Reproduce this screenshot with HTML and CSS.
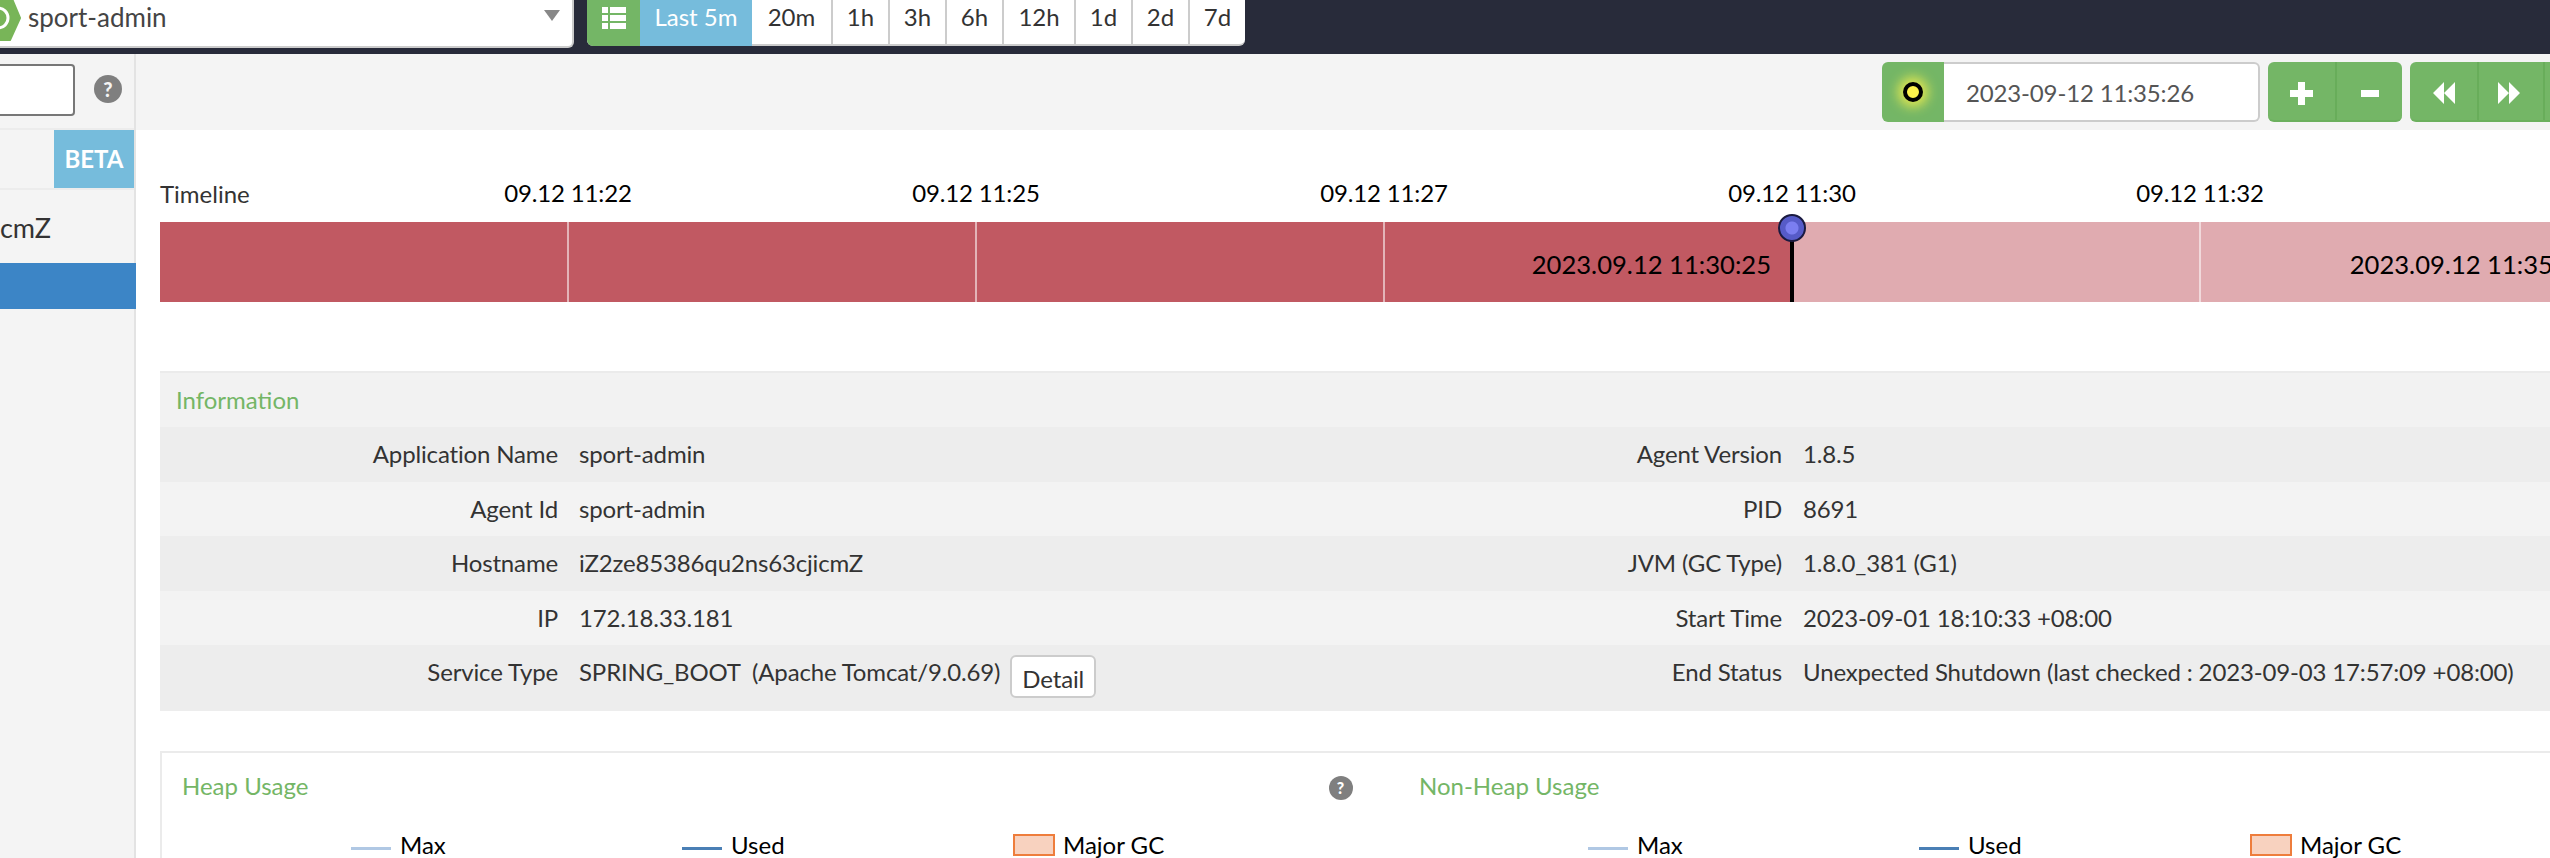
FILE: index.html
```html
<!DOCTYPE html>
<html lang="en">
<head>
    <meta charset="UTF-8">
    <title>Inspector</title>
    <link rel="stylesheet" href="styles.css">
</head>
<body>
    <div class="topbar">
        <div class="app-select">
            <svg class="app-logo" width="24" height="44" viewBox="0 0 24 44">
                <polygon points="-4,-6 10,-6 20,18 10,40 -4,40" fill="#78b558" stroke="#78b558" stroke-width="2" stroke-linejoin="round"/>
                <path d="M-2 8 A10 10 0 0 1 -2 28" fill="none" stroke="#fff" stroke-width="3"/>
            </svg>
            <span class="app-name">sport-admin</span>
            <span class="app-caret"></span>
        </div>
        <div class="range-group">
            <div class="range-icon">
                <svg width="24" height="22" viewBox="0 0 24 22" fill="#fff">
                    <rect x="0" y="0" width="6" height="6"/><rect x="8" y="0" width="16" height="6"/>
                    <rect x="0" y="8" width="6" height="6"/><rect x="8" y="8" width="16" height="6"/>
                    <rect x="0" y="16" width="6" height="6"/><rect x="8" y="16" width="16" height="6"/>
                </svg>
            </div>
            <div class="range-btn range-active">Last 5m</div>
            <div class="range-btn w-20m">20m</div>
            <div class="range-btn w-short">1h</div>
            <div class="range-btn w-short">3h</div>
            <div class="range-btn w-short">6h</div>
            <div class="range-btn w-12h">12h</div>
            <div class="range-btn w-short">1d</div>
            <div class="range-btn w-short">2d</div>
            <div class="range-btn w-short">7d</div>
        </div>
    </div>

    <div class="main">
        <div class="sidebar">
            <div class="side-search">
                <div class="side-input"></div>
                <div class="help-icon">?</div>
            </div>
            <div class="side-beta-row">
                <div class="side-beta">BETA</div>
            </div>
            <div class="side-agent">iZ2ze85386qu2ns63cjicmZ</div>
            <div class="side-selected"></div>
        </div>

        <div class="content">
            <div class="toolbar">
                <div class="date-picker">
                    <div class="date-live"><span class="live-dot"></span></div>
                    <div class="date-value">2023-09-12 11:35:26</div>
                </div>
                <div class="green-group">
                    <div class="green-btn">
                        <svg width="23" height="23" viewBox="0 0 23 23" fill="#fff"><path d="M8 0h7v8h8v7h-8v8H8v-8H0V8h8z"/></svg>
                    </div>
                    <div class="green-btn">
                        <svg width="18" height="7" viewBox="0 0 18 7" fill="#fff"><rect width="18" height="7"/></svg>
                    </div>
                </div>
                <div class="green-group">
                    <div class="green-btn">
                        <svg width="22" height="22" viewBox="0 0 22 22" fill="#fff"><path d="M0 11 11 0v22zM11 11 22 0v22z"/></svg>
                    </div>
                    <div class="green-btn btn-forward">
                        <svg width="22" height="22" viewBox="0 0 22 22" fill="#fff"><path d="M22 11 11 0v22zM11 11 0 0v22z"/></svg>
                    </div>
                    <div class="green-btn"></div>
                </div>
            </div>

            <div class="timeline">
                <div class="tick-row">
                    <div class="tick-title">Timeline</div>
                    <div class="tick-label">09.12 11:22</div>
                    <div class="tick-label">09.12 11:25</div>
                    <div class="tick-label">09.12 11:27</div>
                    <div class="tick-label">09.12 11:30</div>
                    <div class="tick-label">09.12 11:32</div>
                </div>
                <div class="bar">
                    <div class="seg seg-dark seg-first"></div>
                    <div class="seg seg-dark"></div>
                    <div class="seg seg-dark"></div>
                    <div class="seg seg-dark seg-current">2023.09.12 11:30:25</div>
                    <div class="seg seg-light"></div>
                    <div class="seg seg-light">2023.09.12 11:35:26</div>
                    <div class="pin"><span class="pin-head"></span></div>
                </div>
            </div>

            <div class="info">
                <div class="info-head">Information</div>
                <div class="info-row">
                    <div class="info-cell"><div class="info-label">Application Name</div><div>sport-admin</div></div>
                    <div class="info-cell"><div class="info-label">Agent Version</div><div>1.8.5</div></div>
                </div>
                <div class="info-row row-light">
                    <div class="info-cell"><div class="info-label">Agent Id</div><div>sport-admin</div></div>
                    <div class="info-cell"><div class="info-label">PID</div><div>8691</div></div>
                </div>
                <div class="info-row">
                    <div class="info-cell"><div class="info-label">Hostname</div><div>iZ2ze85386qu2ns63cjicmZ</div></div>
                    <div class="info-cell"><div class="info-label">JVM (GC Type)</div><div>1.8.0_381 (G1)</div></div>
                </div>
                <div class="info-row row-light">
                    <div class="info-cell"><div class="info-label">IP</div><div>172.18.33.181</div></div>
                    <div class="info-cell"><div class="info-label">Start Time</div><div>2023-09-01 18:10:33 +08:00</div></div>
                </div>
                <div class="info-row row-last">
                    <div class="info-cell">
                        <div class="info-label">Service Type</div>
                        <div class="service-value">SPRING_BOOT &nbsp;(Apache Tomcat/9.0.69)</div>
                        <div class="detail-btn">Detail</div>
                    </div>
                    <div class="info-cell"><div class="info-label">End Status</div><div>Unexpected Shutdown (last checked : 2023-09-03 17:57:09 +08:00)</div></div>
                </div>
            </div>

            <div class="charts">
                <div class="chart">
                    <div class="chart-head">
                        <span class="chart-title">Heap Usage</span>
                        <span class="help-icon help-small">?</span>
                    </div>
                    <div class="legend">
                        <div class="legend-item"><span class="line line-max"></span>Max</div>
                        <div class="legend-item"><span class="line line-used"></span>Used</div>
                        <div class="legend-item"><span class="gc-box"></span>Major GC</div>
                    </div>
                </div>
                <div class="chart">
                    <div class="chart-head">
                        <span class="chart-title">Non-Heap Usage</span>
                    </div>
                    <div class="legend">
                        <div class="legend-item"><span class="line line-max"></span>Max</div>
                        <div class="legend-item"><span class="line line-used"></span>Used</div>
                        <div class="legend-item"><span class="gc-box"></span>Major GC</div>
                    </div>
                </div>
            </div>
        </div>
    </div>
</body>
</html>
```

FILE: styles.css
```css
html, body {
    margin: 0;
    height: 100%;
    overflow: hidden;
}

body {
    font-family: Lato, "Open Sans", sans-serif;
    font-size: 24px;
    color: #333;
    background-color: #fff;
}

/* top bar */
.topbar {
    display: flex;
    height: 54px;
    background-color: #282b3a;
}

.app-select {
    display: flex;
    width: 574px;
    height: 48px;
    box-sizing: border-box;
    background-color: #fff;
    border: solid #ccc;
    border-width: 0 2px 2px 0;
    border-radius: 0 0 6px 0;
}

.app-logo {
    flex: none;
}

.app-name {
    margin-left: 4px;
    font-size: 26px;
    line-height: 34px;
    color: #444;
}

.app-caret {
    margin: 10px 12px 0 auto;
    width: 0;
    height: 0;
    border-left: 8px solid transparent;
    border-right: 8px solid transparent;
    border-top: 11px solid #888;
}

.range-group {
    display: flex;
    height: 46px;
    margin-left: 13px;
    background-color: #fff;
    border-bottom: 2px solid #ccc;
    box-sizing: border-box;
    border-radius: 0 0 6px 6px;
}

.range-icon {
    display: flex;
    align-items: flex-start;
    justify-content: center;
    width: 53px;
    height: 46px;
    padding-top: 7px;
    box-sizing: border-box;
    background-color: #74b666;
    border-radius: 0 0 0 6px;
}

.range-btn {
    box-sizing: border-box;
    width: 57px;
    line-height: 34px;
    text-align: center;
    border-left: 2px solid #ccc;
}

.range-active {
    width: 112px;
    height: 46px;
    color: #fff;
    background-color: #76bcdc;
    border-left: none;
}

.w-20m {
    width: 79px;
    border-left: none;
}

.w-12h {
    width: 72px;
}

/* left side */
.main {
    display: flex;
    height: 804px;
}

.sidebar {
    flex: none;
    width: 136px;
    box-sizing: border-box;
    background-color: #f4f4f4;
    border-right: 2px solid #e3e3e3;
}

.side-search {
    display: flex;
    align-items: flex-start;
    height: 74px;
    border-bottom: 2px solid #ececec;
}

.side-input {
    width: 75px;
    height: 52px;
    margin-top: 10px;
    box-sizing: border-box;
    background-color: #fff;
    border: 2px solid #777;
    border-left: none;
    border-radius: 0 4px 4px 0;
}

.help-icon {
    width: 28px;
    height: 28px;
    margin: 21px 0 0 19px;
    border-radius: 50%;
    background-color: #7f7f7f;
    color: #f4f4f4;
    font-size: 20px;
    font-weight: 900;
    line-height: 28px;
    text-align: center;
}

.side-beta-row {
    display: flex;
    justify-content: flex-end;
    height: 60px;
    box-sizing: border-box;
    border-bottom: 2px solid #ececec;
}

.side-beta {
    width: 80px;
    height: 58px;
    background-color: #76bcdc;
    color: #fff;
    font-weight: 700;
    line-height: 58px;
    text-align: center;
}

.side-agent {
    display: flex;
    justify-content: flex-end;
    height: 73px;
    padding-right: 83px;
    font-size: 27px;
    line-height: 76px;
    white-space: nowrap;
}

.side-selected {
    width: 136px;
    height: 46px;
    background-color: #3c85c6;
}

/* right side */
.content {
    flex: 1;
    min-width: 0;
    overflow: hidden;
}

.toolbar {
    display: flex;
    gap: 8px;
    height: 76px;
    padding: 8px 0 0 1746px;
    box-sizing: border-box;
    background-color: #f4f4f4;
}

.date-picker {
    display: flex;
    flex: none;
    width: 378px;
    height: 60px;
}

.date-live {
    display: flex;
    align-items: center;
    justify-content: center;
    width: 62px;
    background-color: #74b666;
    border-radius: 6px 0 0 6px;
}

.live-dot {
    width: 12px;
    height: 12px;
    background-color: #fdf24c;
    border: 4px solid #000;
    border-radius: 50%;
    box-shadow: 0 0 12px 5px rgba(253, 242, 76, 0.8);
}

.date-value {
    flex: 1;
    padding-left: 22px;
    background-color: #fff;
    border: 2px solid #ccc;
    border-left: none;
    border-radius: 0 6px 6px 0;
    color: #555;
    letter-spacing: -0.15px;
    line-height: 58px;
}

.green-group {
    display: flex;
    flex: none;
    height: 60px;
    box-sizing: border-box;
    background-color: #74b666;
    border-bottom: 2px solid #6cb05e;
    border-radius: 6px;
}

.green-btn {
    display: flex;
    align-items: center;
    justify-content: center;
    width: 67px;
    height: 58px;
    padding-top: 4px;
    box-sizing: border-box;
}

.green-btn + .green-btn {
    border-left: 2px solid #68ad5a;
}

.btn-forward {
    width: 66px;
    padding-right: 4px;
}

/* timeline */
.timeline {
    padding: 48px 0 0 24px;
}

.tick-row {
    display: flex;
    height: 44px;
    width: 2448px;
    color: #000;
}

.tick-title {
    flex: none;
    width: 204px;
    color: #333;
    line-height: 32px;
}

.tick-label {
    flex: none;
    width: 408px;
    letter-spacing: -0.15px;
    line-height: 30px;
    text-align: center;
}

.bar {
    position: relative;
    display: flex;
    width: 2449px;
    height: 80px;
}

.seg {
    flex: none;
    width: 408px;
    box-sizing: border-box;
    padding-right: 18px;
    border-right: 2px solid rgba(255, 255, 255, 0.55);
    color: #000;
    font-size: 25.6px;
    line-height: 84px;
    text-align: right;
}

.seg-first {
    width: 409px;
}

.seg-dark {
    background-color: #c15962;
}

.seg-light {
    background-color: #e0abb0;
}

.seg-current {
    padding-right: 22px;
    border-right: none;
}

.pin {
    position: absolute;
    left: 1630px;
    top: 0;
    width: 4px;
    height: 80px;
    background-color: #000;
}

.pin-head {
    position: absolute;
    left: -12px;
    top: -8px;
    width: 28px;
    height: 28px;
    box-sizing: border-box;
    border: 2px solid #1a1a40;
    border-radius: 50%;
    background: radial-gradient(circle, #7b7ef0 0, #7b7ef0 6px, #565bc8 7px);
}

/* information */
.info {
    width: 2448px;
    margin: 69px 0 0 24px;
    border-top: 2px solid #ebebeb;
    background-color: #f2f2f2;
}

.info-head {
    height: 54px;
    padding-left: 16px;
    color: #74b666;
    line-height: 54px;
}

.info-row {
    display: grid;
    grid-template-columns: 1224px 1224px;
    height: 54.5px;
    line-height: 54px;
    background-color: #ededed;
}

.row-light {
    background-color: #f3f3f3;
}

.row-last {
    height: 66px;
}

.info-cell {
    display: flex;
    gap: 21px;
    letter-spacing: -0.15px;
}

.info-label {
    flex: none;
    width: 398px;
    text-align: right;
}

.detail-btn {
    height: 43px;
    margin: 10px 0 0 -11px;
    padding: 0 10px;
    box-sizing: border-box;
    background-color: #fff;
    border: 2px solid #ccc;
    border-radius: 6px;
    line-height: 44px;
}

/* charts */
.charts {
    display: flex;
    width: 2448px;
    height: 120px;
    margin: 40px 0 0 24px;
    box-sizing: border-box;
    border-top: 2px solid #ebebeb;
    border-left: 2px solid #ebebeb;
}

.chart {
    flex: none;
    width: 1237px;
    padding-left: 20px;
    box-sizing: border-box;
}

.chart-head {
    display: flex;
    height: 68px;
    line-height: 66px;
}

.chart-title {
    color: #74b666;
}

.help-small {
    width: 24px;
    height: 24px;
    margin: 23px 0 0 1020px;
    font-size: 16px;
    line-height: 24px;
    color: #fff;
}

.legend {
    display: flex;
    margin-left: 169px;
    color: #000;
}

.legend-item {
    display: flex;
    flex: none;
    align-items: center;
    width: 331px;
    height: 48px;
    line-height: 48px;
}

.line {
    width: 40px;
    height: 3px;
    margin: 6px 9px 0 0;
}

.line-max {
    background-color: #b0c8e4;
}

.line-used {
    background-color: #4a7fb5;
}

.gc-box {
    width: 42px;
    height: 22px;
    margin-right: 8px;
    box-sizing: border-box;
    background-color: #f8d2bf;
    border: 2px solid #ee7d3c;
}
```
